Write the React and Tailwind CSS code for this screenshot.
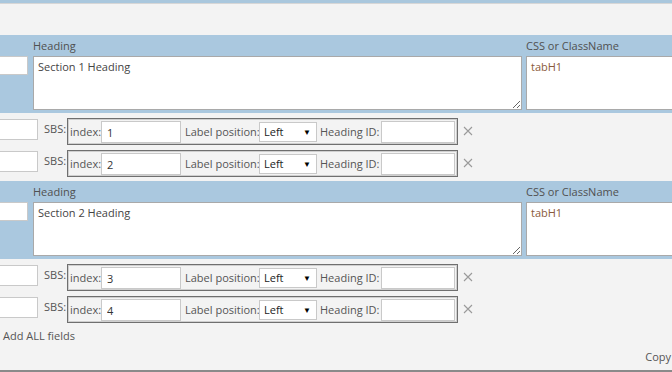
import React from 'react';

const sections = [
  { heading: 'Section 1 Heading', css: 'tabH1', rows: ['1', '2'] },
  { heading: 'Section 2 Heading', css: 'tabH1', rows: ['3', '4'] },
];

function SbsRow({ index }) {
  return (
    <div className="flex items-start h-[27px] whitespace-nowrap">
      <input readOnly className="-ml-[40px] mt-px w-[78px] h-[21px] shrink-0 bg-white border border-[#c9c9c9] outline-none" />
      <span className="ml-[6px] w-[23px] shrink-0 pt-[3px] leading-[16px] text-[#555]">SBS:</span>
      <div className="flex items-center h-[27px] w-[391px] shrink-0 border border-[#6f6f6f] shadow-[inset_0_0_0_1px_#cfcfcf] px-[2px]">
        <span className="w-[31px] shrink-0 leading-[16px] text-[#555]">index:</span>
        <input readOnly defaultValue={index} className="w-[80px] h-[22px] shrink-0 bg-white border border-[#c9c9c9] pl-[5px] pt-[2px] text-[#333] outline-none" />
        <span className="ml-[4px] w-[74px] shrink-0 leading-[16px] text-[#555]">Label position:</span>
        <div className="flex items-center justify-between w-[58px] h-[20px] shrink-0 bg-white border border-[#c9c9c9] pl-[4px] pr-[5px] text-[#222]">
          <span className="pt-[2px]">Left</span>
          <span className="text-[8px] text-black">▼</span>
        </div>
        <span className="ml-[3px] w-[61px] shrink-0 leading-[16px] text-[#555]">Heading ID:</span>
        <input readOnly className="w-[74px] h-[22px] shrink-0 bg-white border border-[#c9c9c9] outline-none" />
      </div>
      <svg className="ml-[5px] mt-[8px] shrink-0" width="10" height="10" viewBox="0 0 10 10">
        <path d="M1 1 L9 9 M9 1 L1 9" stroke="#9a9a9a" strokeWidth="1.1" fill="none" />
      </svg>
    </div>
  );
}

function Section({ heading, css, rows }) {
  return (
    <div>
      <div className="flex h-[78px] bg-[#aac8df]">
        <div className="w-[33px] shrink-0 pt-[21px]">
          <input readOnly className="-ml-[40px] w-[68px] h-[19px] bg-white border border-[#c9c9c9] outline-none" />
        </div>
        <div className="w-[489px] shrink-0">
          <div className="h-[21px] pt-[3px] leading-[16px] text-[#505050]">Heading</div>
          <textarea
            readOnly
            defaultValue={heading}
            className="block w-[489px] h-[54px] bg-white border border-[#a9a9a9] px-[4px] pt-[2px] text-[#444] outline-none"
          />
        </div>
        <div className="ml-[4px] w-[200px] shrink-0">
          <div className="h-[21px] pt-[3px] leading-[16px] text-[#505050]">CSS or ClassName</div>
          <textarea
            readOnly
            defaultValue={css}
            className="block w-[200px] h-[54px] bg-white border border-[#a9a9a9] px-[4px] pt-[2px] text-[#8a5a3a] outline-none resize-none"
          />
        </div>
      </div>
      <div className="flex flex-col gap-[5px] pt-[5px] pb-[4px]">
        {rows.map((r) => (
          <SbsRow key={r} index={r} />
        ))}
      </div>
    </div>
  );
}

export default function App() {
  return (
    <div className="w-[672px] h-[372px] overflow-hidden bg-[#f3f3f3] font-['Open_Sans',sans-serif] text-[11px] text-[#444] flex flex-col">
      <div className="h-[3px] bg-[#a9c7dd]" />
      <div className="h-px bg-[#d6d6d6]" />
      <div className="mt-[31px]">
        {sections.map((s) => (
          <Section key={s.heading} {...s} />
        ))}
      </div>
      <div className="mt-[1px] pl-[3px] leading-[16px] text-[#555]">Add ALL fields</div>
      <div className="mt-[5px] flex justify-end pr-[1px] leading-[16px] text-[#555]">Copy</div>
      <div className="mt-auto h-[2px] bg-[#8a8a8a]" />
    </div>
  );
}
